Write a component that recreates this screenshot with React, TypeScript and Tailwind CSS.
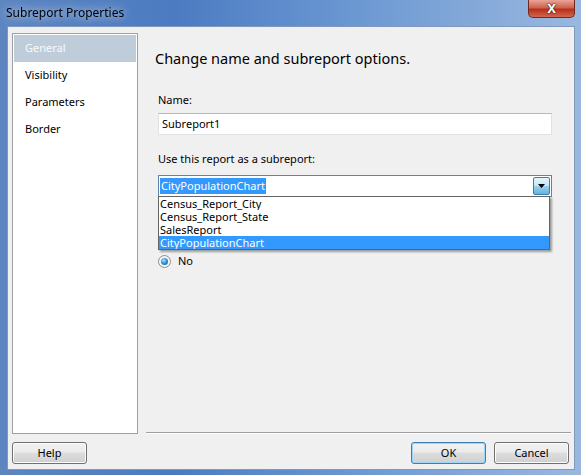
import React from 'react';

const font = { fontFamily: '"Segoe UI", "Noto Sans", "Open Sans", sans-serif' };

function Button({ label, primary }: { label: string; primary?: boolean }) {
  return (
    <div
      className={`w-[75px] h-[22px] rounded-[3px] border flex items-center justify-center text-[11px] text-black bg-[linear-gradient(to_bottom,#f2f2f2_0%,#ebebeb_45%,#dddddd_50%,#cfcfcf_100%)] ${
        primary ? 'border-[#3c7fb1] shadow-[inset_0_0_0_1px_#9fd4f5]' : 'border-[#707070] shadow-[inset_0_0_0_1px_#fcfcfc]'
      }`}
    >
      {label}
    </div>
  );
}

export default function App() {
  const pages = ['General', 'Visibility', 'Parameters', 'Border'];
  const reports = ['Census_Report_City', 'Census_Report_State', 'SalesReport', 'CityPopulationChart'];

  return (
    <div
      style={font}
      className="w-[581px] h-[475px] flex flex-col bg-[linear-gradient(to_right,#5d86c0_0%,#4c7bc2_30%,#6a97d2_60%,#9ab8df_100%)] overflow-hidden"
    >
      {/* Title bar */}
      <div className="h-[26px] flex items-start justify-between pl-[6px] pr-[6px]">
        <span className="mt-[4px] text-[12px] text-black drop-shadow-[0_0_4px_rgba(255,255,255,0.9)]">
          Subreport Properties
        </span>
        <div className="w-[47px] h-[18px] rounded-b-[5px] border border-t-0 border-[#6e2b22] bg-[linear-gradient(to_bottom,#e9a597_0%,#d0624d_45%,#b8301c_55%,#d4664c_100%)] flex items-center justify-center">
          <span className="text-[13px] font-bold leading-none text-white [text-shadow:0_0_2px_#3a1410,0_0_1px_#3a1410]">
            X
          </span>
        </div>
      </div>

      {/* Client area */}
      <div className="flex-1 ml-[7px] mr-[6px] mb-[5px] border border-[#7f99bd] bg-[#f0f0f0] flex flex-col px-[4px] pt-[6px] pb-[5px]">
        <div className="flex-1 flex gap-[8px]">
          {/* Sidebar */}
          <div className="w-[126px] bg-white border border-[#a0a0a0] p-[1px] flex flex-col">
            {pages.map((p, i) => (
              <div
                key={p}
                className={`h-[27px] flex items-center pl-[11px] text-[11px] ${
                  i === 0 ? 'bg-[#bfcddb] text-[#f7f9fb]' : 'text-black'
                }`}
              >
                {p}
              </div>
            ))}
          </div>

          {/* Page content */}
          <div className="flex-1 flex flex-col mr-[-1px]">
            <div className="flex-1 flex flex-col pl-[9px] pt-[15px] pr-[19px]">
              <div className="text-[14.5px] leading-[20px] text-black">Change name and subreport options.</div>

              <div className="pl-[3px] mt-[24px] flex flex-col">
                <div className="text-[11px] leading-[16px] text-black">Name:</div>
                <div className="mt-[5px] h-[22px] bg-white border border-[#dfe1e6] border-t-[#b4b7bd] flex items-center pl-[3px] text-[11px] text-black">
                  Subreport1
                </div>

                <div className="mt-[16px] text-[11px] leading-[16px] text-black">Use this report as a subreport:</div>

                <div className="relative mt-[8px]">
                  <div className="h-[22px] bg-white border border-[#5e84ad] flex items-center justify-between pl-[1px] pr-[1px]">
                    <span className="bg-[#3399ff] text-white text-[11px] leading-[16px] px-[1px]">CityPopulationChart</span>
                    <div className="w-[17px] h-[18px] border border-[#3c7fb1] rounded-[2px] bg-[linear-gradient(to_bottom,#e5f4fc_0%,#c4e5f6_50%,#98d1ef_51%,#68b3db_100%)] flex items-center justify-center">
                      <svg width="7" height="4" viewBox="0 0 7 4">
                        <path d="M0 0h7L3.5 4z" fill="#000" />
                      </svg>
                    </div>
                  </div>

                  {/* Open dropdown list */}
                  <div className="absolute left-0 right-[2px] top-[21px] z-10 bg-white border border-[#646464] shadow-[2px_2px_2px_rgba(0,0,0,0.35)] flex flex-col">
                    {reports.map((r, i) => (
                      <div
                        key={r}
                        className={`h-[13px] leading-[13px] overflow-hidden pl-[1px] text-[11px] ${
                          i === reports.length - 1 ? 'bg-[#3399ff] text-white' : 'text-black'
                        }`}
                      >
                        {r}
                      </div>
                    ))}
                  </div>
                </div>

                <div className="mt-[56px] flex items-center gap-[6px] h-[16px]">
                  <div className="w-[13px] h-[13px] rounded-full border border-[#8e8f8f] bg-[#f4f4f4] flex items-center justify-center">
                    <div className="w-[7px] h-[7px] rounded-full bg-[radial-gradient(circle_at_40%_35%,#a9e4ff_0%,#2d8fd5_50%,#0e4a8a_100%)]" />
                  </div>
                  <span className="text-[11px] text-black ml-[1px]">No</span>
                </div>
              </div>
            </div>

            <div className="h-[1px] bg-[#a0a0a0] border-b border-white box-content" />
          </div>
        </div>

        {/* Footer buttons */}
        <div className="mt-[8px] flex items-center justify-between pr-[1px]">
          <Button label="Help" />
          <div className="flex gap-[8px]">
            <Button label="OK" primary />
            <Button label="Cancel" />
          </div>
        </div>
      </div>
    </div>
  );
}
